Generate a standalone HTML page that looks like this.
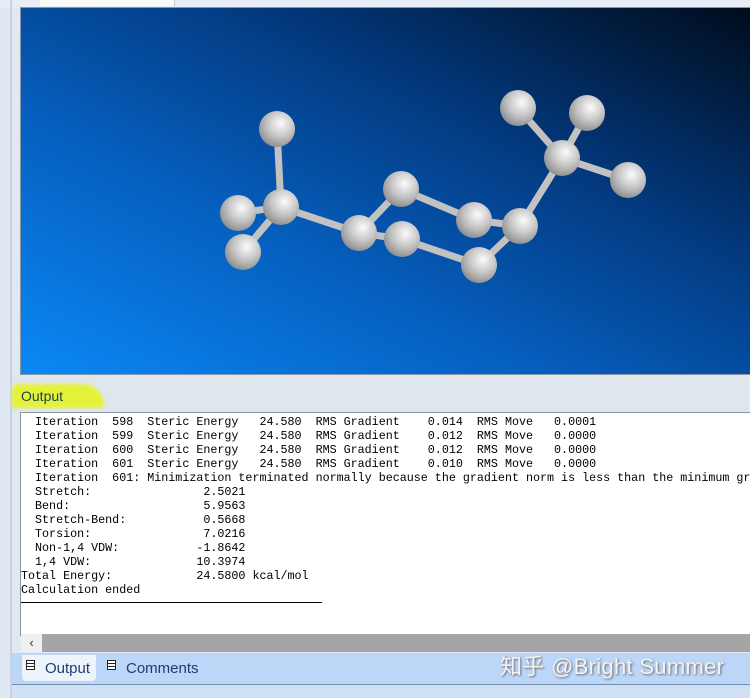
<!DOCTYPE html>
<html><head><meta charset="utf-8"><style>
body{margin:0;width:750px;height:698px;overflow:hidden;background:#dfe8f3;position:relative;font-family:"Liberation Sans",sans-serif}
.top{position:absolute;left:0;top:0;width:750px;height:8px;background:#e6edf7}
.tab0{position:absolute;left:40px;top:0;width:134px;height:6px;background:#fbfbf5;border-right:1px solid #c0c8d0}
.lb{position:absolute;left:10px;top:0;width:2px;height:698px;background:#c9d3de}
.view{position:absolute;left:20px;top:7px;width:730px;height:368px;border:1px solid #8a96a4;border-right:none;box-sizing:border-box;background:linear-gradient(to top right,#0a88f5 0%,#0660c0 35%,#033a80 65%,#000c1c 100%)}
.gray{position:absolute;left:12px;top:376px;width:738px;height:36px;background:#dfe6ee}
.hl{position:absolute;left:12px;top:384px;width:92px;height:24px;background:#e4f23a;border-radius:10px 40px 6px 4px;filter:blur(1.5px)}
.otitle{position:absolute;left:21px;top:388px;font-size:14px;color:#1d3f50}
.out{position:absolute;left:20px;top:412px;width:730px;height:224px;background:#fff;border:1px solid #8a96a4;border-right:none;box-sizing:border-box}
pre{position:absolute;left:21px;top:415px;margin:0;font-family:"Liberation Mono",monospace;font-size:11.7px;line-height:14px;color:#000}
.rule{position:absolute;left:21px;top:602px;width:301px;height:1px;background:#000}
.sb{position:absolute;left:21px;top:634px;width:729px;height:18px;background:#a5a5a5}
.sbb{position:absolute;left:21px;top:634px;width:21px;height:18px;background:#f0f0f0;font-size:13px;text-align:center;line-height:18px;color:#333}
.tabs{position:absolute;left:12px;top:653px;width:738px;height:31px;background:#bcd6f8;border-bottom:1px solid #6f8fb0}
.bot{position:absolute;left:12px;top:685px;width:738px;height:13px;background:#cfe0f5}
.t1{position:absolute;left:22px;top:655px;width:74px;height:26px;background:#eef4fb;border-radius:0 0 4px 4px}
.tab{position:absolute;top:660px;font-size:15px;color:#1f3c70}
.ic{position:absolute;top:660px;width:9px;height:10px;border:1px solid #222;box-sizing:border-box;background:repeating-linear-gradient(#fff 0 2px,#222 2px 3px)}
.wm{position:absolute;left:500px;top:649px;font-size:22px;letter-spacing:0.3px;color:#f4f4f4;text-shadow:1px 1px 2px #666;font-family:"Liberation Sans","Noto Sans CJK SC",sans-serif}
</style></head><body>
<div class="top"></div><div class="tab0"></div><div class="lb"></div>
<div class="view">
<svg width="730" height="368" viewBox="20 7 730 368" style="position:absolute;left:-1px;top:-1px">
<defs><radialGradient id="a" cx="0.6" cy="0.35" r="0.7"><stop offset="0" stop-color="#fbfbfb"/><stop offset="0.5" stop-color="#c8c8c8"/><stop offset="1" stop-color="#8a8a8a"/></radialGradient></defs>
<g stroke="#c2c2c2" stroke-width="7" stroke-linecap="round">
<line x1="277" y1="129" x2="281" y2="207"/><line x1="238" y1="213" x2="281" y2="207"/><line x1="243" y1="252" x2="281" y2="207"/>
<line x1="281" y1="207" x2="359" y2="233"/><line x1="359" y1="233" x2="401" y2="189"/><line x1="359" y1="233" x2="402" y2="239"/>
<line x1="401" y1="189" x2="474" y2="220"/><line x1="474" y1="220" x2="520" y2="226"/><line x1="402" y1="239" x2="479" y2="265"/><line x1="479" y1="265" x2="520" y2="226"/>
<line x1="520" y1="226" x2="562" y2="158"/><line x1="562" y1="158" x2="518" y2="108"/><line x1="562" y1="158" x2="587" y2="113"/><line x1="562" y1="158" x2="628" y2="180"/>
</g>
<g fill="url(#a)">
<circle cx="277" cy="129" r="18"/><circle cx="238" cy="213" r="18"/><circle cx="243" cy="252" r="18"/><circle cx="281" cy="207" r="18"/>
<circle cx="359" cy="233" r="18"/><circle cx="401" cy="189" r="18"/><circle cx="402" cy="239" r="18"/><circle cx="474" cy="220" r="18"/>
<circle cx="479" cy="265" r="18"/><circle cx="520" cy="226" r="18"/><circle cx="562" cy="158" r="18"/><circle cx="518" cy="108" r="18"/>
<circle cx="587" cy="113" r="18"/><circle cx="628" cy="180" r="18"/>
</g></svg></div>
<div class="gray"></div><div class="hl"></div><div class="otitle">Output</div>
<div class="out"></div>
<pre>  Iteration  598  Steric Energy   24.580  RMS Gradient    0.014  RMS Move   0.0001
  Iteration  599  Steric Energy   24.580  RMS Gradient    0.012  RMS Move   0.0000
  Iteration  600  Steric Energy   24.580  RMS Gradient    0.012  RMS Move   0.0000
  Iteration  601  Steric Energy   24.580  RMS Gradient    0.010  RMS Move   0.0000
  Iteration  601: Minimization terminated normally because the gradient norm is less than the minimum gr
  Stretch:                2.5021
  Bend:                   5.9563
  Stretch-Bend:           0.5668
  Torsion:                7.0216
  Non-1,4 VDW:           -1.8642
  1,4 VDW:               10.3974
Total Energy:            24.5800 kcal/mol
Calculation ended</pre>
<div class="rule"></div>
<div class="sb"></div><div class="sbb">&lsaquo;</div>
<div class="tabs"></div><div class="bot"></div><div class="t1"></div>
<div class="ic" style="left:26px"></div><div class="tab" style="left:45px">Output</div>
<div class="ic" style="left:107px"></div><div class="tab" style="left:126px">Comments</div>
<div class="wm">知乎 @Bright Summer</div>
</body></html>
